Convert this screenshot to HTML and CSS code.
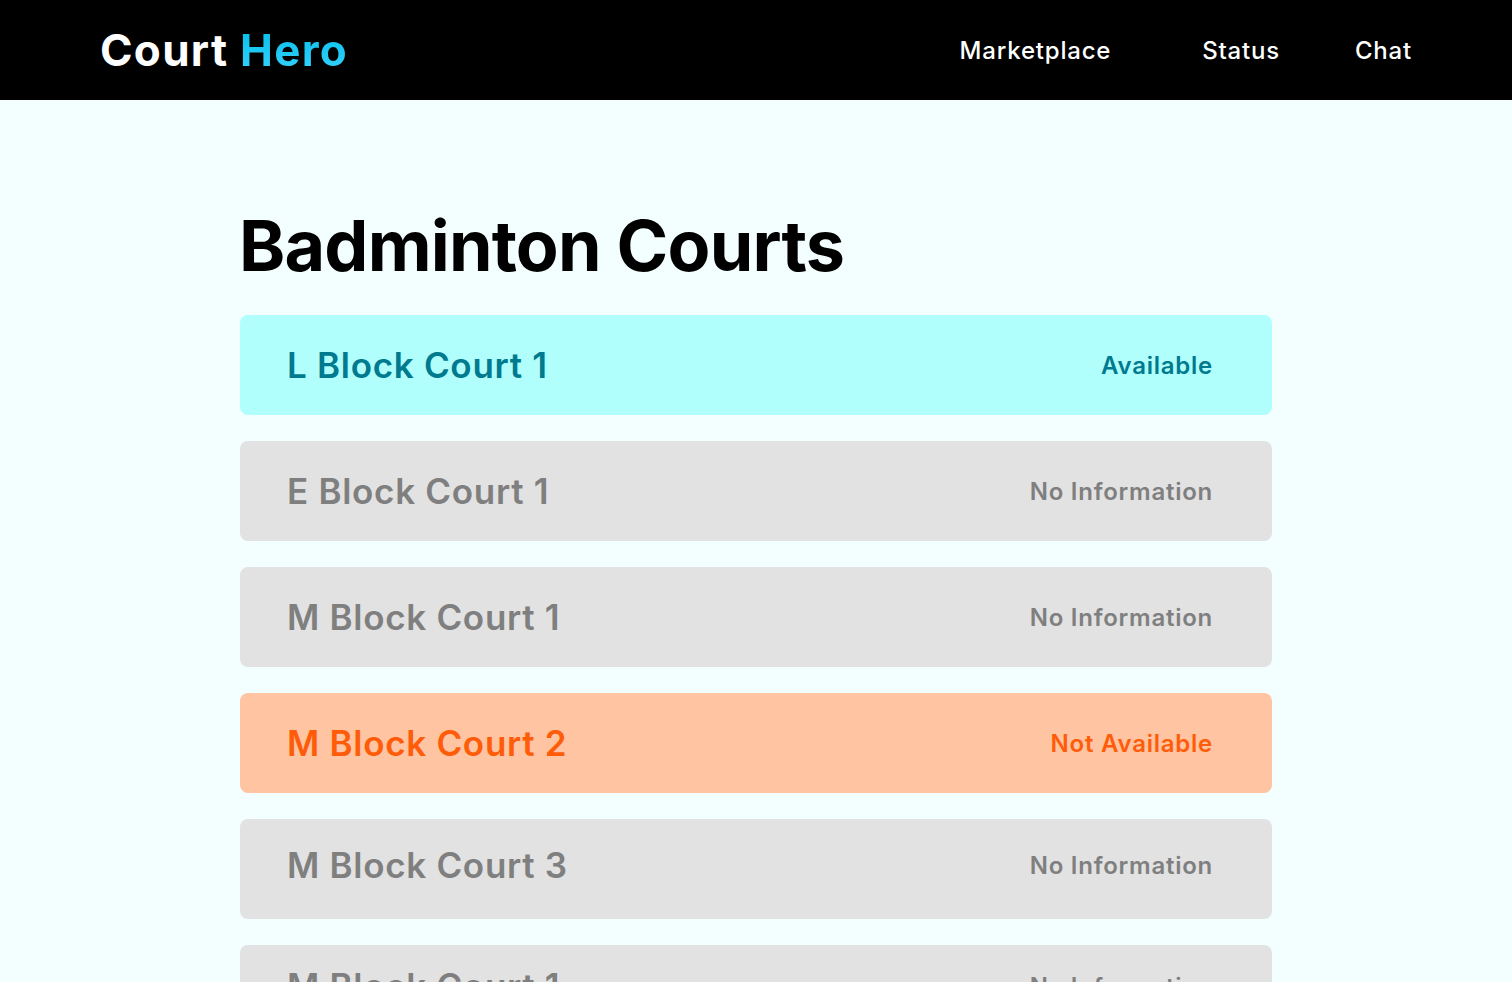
FILE: index.html
```html
<!DOCTYPE html>
<html lang="en">
<head>
  <meta charset="UTF-8">
  <meta name="viewport" content="width=device-width, initial-scale=1.0">
  <title>Court Hero</title>
  <link rel="stylesheet" href="styles.css">
</head>
<body>

<nav class="navbar">
  <a class="logo" href="#">Court <span class="logo-accent">Hero</span></a>
  <div class="nav-links">
    <a class="nav-link nav-market" href="#">Marketplace</a>
    <a class="nav-link" href="#">Status</a>
    <a class="nav-link" href="#">Chat</a>
  </div>
</nav>

<main class="content">
  <h1 class="page-title">Badminton Courts</h1>

  <div class="court-list">
    <div class="court available">
      <span class="court-name">L Block Court 1</span>
      <span class="court-status">Available</span>
    </div>
    <div class="court unknown">
      <span class="court-name">E Block Court 1</span>
      <span class="court-status">No Information</span>
    </div>
    <div class="court unknown">
      <span class="court-name">M Block Court 1</span>
      <span class="court-status">No Information</span>
    </div>
    <div class="court busy">
      <span class="court-name">M Block Court 2</span>
      <span class="court-status">Not Available</span>
    </div>
    <div class="court unknown rise-1">
      <span class="court-name">M Block Court 3</span>
      <span class="court-status">No Information</span>
    </div>
    <div class="court unknown rise-2">
      <span class="court-name">M Block Court 1</span>
      <span class="court-status">No Information</span>
    </div>
  </div>
</main>

</body>
</html>
```

FILE: styles.css
```css
body {
  margin: 0;
  padding: 0;
  font-family: Inter, "Liberation Sans", sans-serif;
  background-color: #f3fffe;
}

a {
  text-decoration: none;
}

.navbar {
  height: 100px;
  background-color: #000;
  display: flex;
  align-items: center;
  justify-content: space-between;
  padding: 0 100px;
}

.logo {
  color: #fff;
  font-size: 44px;
  font-weight: 700;
  letter-spacing: 1.3px;
}

.logo-accent {
  background: linear-gradient(180deg, #00bde8, #3ad3ff);
  -webkit-background-clip: text;
  background-clip: text;
  color: transparent;
}

.nav-links {
  display: flex;
  align-items: center;
  gap: 75px;
}

.nav-link {
  color: #fff;
  font-size: 24px;
  font-weight: 500;
  letter-spacing: 0.8px;
}

.nav-market {
  margin-right: 16px;
}

.content {
  max-width: 1032px;
  margin: 0 auto;
  padding-top: 105px;
}

.page-title {
  margin: 0 0 28px -1px;
  font-size: 70px;
  font-weight: 700;
  line-height: 82px;
  letter-spacing: -0.8px;
  color: #000;
}

.court-list {
  display: flex;
  flex-direction: column;
  gap: 26px;
}

.court {
  box-sizing: border-box;
  height: 100px;
  border-radius: 8px;
  display: flex;
  align-items: center;
  justify-content: space-between;
  padding: 0 59px 0 47px;
}

.rise-1 {
  padding-bottom: 8px;
}

.rise-2 {
  padding-bottom: 18px;
}

.court-name {
  font-size: 35px;
  font-weight: 600;
  letter-spacing: 0.7px;
}

.court-status {
  font-size: 24px;
  font-weight: 600;
  letter-spacing: 0.75px;
}

.available {
  background-color: #b0fffd;
  color: #007a8e;
}

.unknown {
  background-color: #e2e2e2;
  color: #7f7f7f;
}

.busy {
  background-color: #ffc4a2;
  color: #ff5c0a;
}
```
